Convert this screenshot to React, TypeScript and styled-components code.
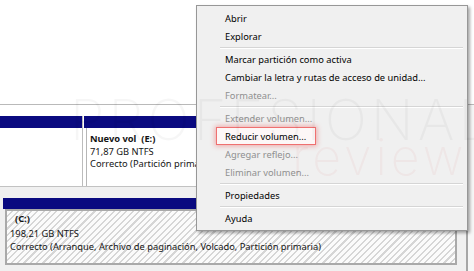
import React from "react";
import styled, { createGlobalStyle } from "styled-components";

const Global = createGlobalStyle`
  html, body { margin: 0; padding: 0; background: #ffffff; }
  body { font-family: "Noto Sans", "Open Sans", sans-serif; }
  #root { width: 474px; height: 271px; }
`;

const Screen = styled.div`
  position: relative;
  width: 474px;
  height: 271px;
  overflow: hidden;
  display: flex;
  flex-direction: column;
  background: #ffffff;
`;

const TopBlank = styled.div`
  height: 104px;
  flex: none;
`;

const DiskArea = styled.div`
  flex: 1;
  display: flex;
  background: #f0f0f0;
  border-top: 1px solid #b9b9b9;
  min-height: 0;
`;

const DiskList = styled.div`
  flex: 1;
  display: flex;
  flex-direction: column;
  min-width: 0;
`;

const ScrollTrack = styled.div`
  width: 6px;
  flex: none;
  border-left: 2px solid #a6a6a6;
  background: #f6f6f6;
`;

const DiskRow = styled.div`
  height: 82px;
  flex: none;
  box-sizing: border-box;
  padding-top: 11px;
  background: #ffffff;
  border-bottom: 1px solid #c2c2c2;
  display: flex;
`;

const Partition = styled.div<{ $width?: number }>`
  display: flex;
  flex-direction: column;
  ${(p) => (p.$width ? `width: ${p.$width}px; flex: none;` : "flex: 1;")}
  & + & {
    margin-left: 1px;
  }
`;

const LeftPartition = styled(Partition)`
  border-right: 1px solid #bcbcbc;
`;

const BlueBar = styled.div<{ $h?: number }>`
  height: ${(p) => p.$h ?? 12}px;
  flex: none;
  background: #0a0a80;
`;

const PartBody = styled.div`
  flex: 1;
  margin-left: 2px;
  border-left: 1px solid #b6b6b6;
  padding: 5px 0 0 3px;
  font-size: 9.3px;
  line-height: 12.5px;
  color: #141414;
  white-space: nowrap;
  overflow: hidden;
`;

const Line = styled.div<{ $bold?: boolean; $indent?: number; $gap?: number }>`
  font-weight: ${(p) => (p.$bold ? 700 : 400)};
  padding-left: ${(p) => p.$indent ?? 0}px;
  margin-bottom: ${(p) => p.$gap ?? 0}px;
`;

const DiskRow2 = styled.div`
  margin-top: 10px;
  padding: 1px 8px 0 3px;
  display: flex;
  flex-direction: column;
`;

const HatchBody = styled.div`
  height: 56px;
  box-sizing: border-box;
  margin: 0 1px 0 2px;
  border: 2px solid #a9a9a9;
  padding: 2px 0 0 3px;
  background: repeating-linear-gradient(
    135deg,
    #fbfbfb 0px,
    #fbfbfb 3px,
    #d6d6d6 3px,
    #d6d6d6 4.5px
  );
  font-size: 9.3px;
  line-height: 12.5px;
  color: #141414;
  white-space: nowrap;
  overflow: hidden;
`;

const Menu = styled.div`
  position: absolute;
  left: 196px;
  top: 5px;
  width: 270px;
  padding: 3px 0;
  background: #f0f0f0;
  border: 1px solid #979797;
  box-shadow: 2px 2px 3px rgba(0, 0, 0, 0.35);
  z-index: 3;
  font-size: 9.3px;
`;

const Item = styled.div<{ $disabled?: boolean }>`
  height: 18px;
  display: flex;
  align-items: center;
  padding-left: 28px;
  color: ${(p) => (p.$disabled ? "#8f8f8f" : "#000000")};
  white-space: nowrap;
`;

const HighlightItem = styled.div`
  height: 18px;
  display: flex;
  align-items: center;
  padding-left: 19px;
`;

const HighlightBox = styled.span`
  display: inline-flex;
  align-items: center;
  height: 16px;
  padding: 0 9px 0 8px;
  background: #fdf7f7;
  border: 1px solid #ef7070;
  box-shadow: 0 0 5px 1px rgba(235, 60, 60, 0.4);
  color: #000000;
  white-space: nowrap;
`;

const Separator = styled.div`
  height: 5px;
  display: flex;
  align-items: center;
  padding-left: 23px;
  padding-right: 4px;
  &::after {
    content: "";
    flex: 1;
    height: 1px;
    background: #d5d5d5;
    box-shadow: 0 1px 0 #ffffff;
  }
`;

const Watermark = styled.div`
  position: absolute;
  inset: 0;
  pointer-events: none;
  z-index: 5;
`;

const WatermarkWord = styled.span<{ $x: number; $y: number; $size: number; $color: string }>`
  position: absolute;
  left: ${(p) => p.$x}px;
  top: ${(p) => p.$y}px;
  font-family: "Inter", "Lato", sans-serif;
  font-weight: 200;
  font-size: ${(p) => p.$size}px;
  line-height: 1;
  letter-spacing: 4px;
  color: ${(p) => p.$color};
  white-space: nowrap;
`;

export default function App() {
  return (
    <>
      <Global />
      <Screen>
        <TopBlank />
        <DiskArea>
          <DiskList>
            <DiskRow>
              <LeftPartition $width={82}>
                <BlueBar />
              </LeftPartition>
              <Partition>
                <BlueBar />
                <PartBody>
                  <Line $bold>Nuevo vol&nbsp;&nbsp;(E:)</Line>
                  <Line>71,87 GB NTFS</Line>
                  <Line>Correcto (Partición primaria)</Line>
                </PartBody>
              </Partition>
            </DiskRow>
            <DiskRow2>
              <BlueBar $h={11} />
              <HatchBody>
                <Line $bold $indent={5} $gap={2.5}>(C:)</Line>
                <Line>198,21 GB NTFS</Line>
                <Line>Correcto (Arranque, Archivo de paginación, Volcado, Partición primaria)</Line>
              </HatchBody>
            </DiskRow2>
          </DiskList>
          <ScrollTrack />
        </DiskArea>

        <Menu>
          <Item>Abrir</Item>
          <Item>Explorar</Item>
          <Separator />
          <Item>Marcar partición como activa</Item>
          <Item>Cambiar la letra y rutas de acceso de unidad...</Item>
          <Item $disabled>Formatear...</Item>
          <Separator />
          <Item $disabled>Extender volumen...</Item>
          <HighlightItem>
            <HighlightBox>Reducir volumen...</HighlightBox>
          </HighlightItem>
          <Item $disabled>Agregar reflejo...</Item>
          <Item $disabled>Eliminar volumen...</Item>
          <Separator />
          <Item>Propiedades</Item>
          <Separator />
          <Item>Ayuda</Item>
        </Menu>

        <Watermark>
          <WatermarkWord $x={70} $y={92} $size={56} $color="rgba(0,0,0,0.035)">
            PROFESIONAL
          </WatermarkWord>
          <WatermarkWord $x={292} $y={132} $size={50} $color="rgba(220,70,70,0.055)">
            review
          </WatermarkWord>
        </Watermark>
      </Screen>
    </>
  );
}
